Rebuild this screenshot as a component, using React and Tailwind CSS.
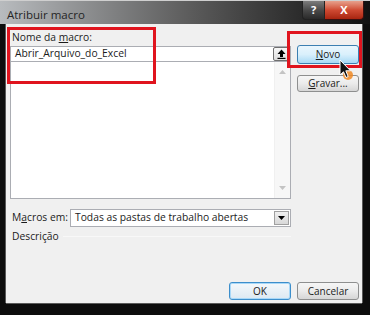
import React from 'react';

const font = { fontFamily: '"Open Sans", "Noto Sans", sans-serif' };

function Btn({ children, primary, focused, className = '' }) {
    const base = 'flex items-center justify-center rounded-[3px] border text-[10px] text-[#1b1b1b]';
    const skin = primary
        ? 'border-[#3c7fb1] bg-gradient-to-b from-[#eaf6fd] via-[#d9f0fc] to-[#a7d9f5]'
        : focused
            ? 'border-[#3c8ecb] bg-gradient-to-b from-[#f4f8fb] to-[#dde9f2] shadow-[inset_0_0_0_1px_#a8d8f8]'
            : 'border-[#8e8f8f] bg-gradient-to-b from-[#f6f6f6] via-[#ebebeb] to-[#d6d6d6]';
    return <div className={`${base} ${skin} ${className}`}>{children}</div>;
}

function Cursor() {
    return (
        <svg className="absolute left-[337px] top-[59px]" width="22" height="24" viewBox="0 0 22 24">
            <circle cx="11" cy="16" r="5" fill="#f08a24" opacity="0.85" />
            <path d="M3 1 L3 16 L6.5 12.8 L9 18.5 L11.2 17.5 L8.8 11.8 L13.5 11.8 Z" fill="#111" stroke="#fff" strokeWidth="1" strokeLinejoin="round" />
        </svg>
    );
}

export default function App() {
    return (
        <div className="relative w-[370px] h-[315px] bg-[#0d0d0d] overflow-hidden select-none" style={font}>
            {/* title bar */}
            <div className="h-[24px] flex items-start bg-gradient-to-r from-[#b8bbbe] via-[#5e5e5e] to-[#111] border-t border-[#cfcfcf]">
                <span className="ml-[7px] mt-[5px] text-[11.5px] text-[#252525]">Atribuir macro</span>
                <div className="ml-auto mr-[6px] flex">
                    <div className="w-[23px] h-[19px] flex items-center justify-center rounded-bl-[4px] border border-t-0 border-[#222] bg-gradient-to-b from-[#7c7c7c] via-[#4a4a4a] to-[#2a2a2a] text-[11px] font-bold text-white">?</div>
                    <div className="w-[39px] h-[19px] flex items-center justify-center rounded-br-[4px] border border-l-0 border-t-0 border-[#3a1010] bg-gradient-to-b from-[#e6a08c] via-[#cf4a32] to-[#a8240f] text-[11px] font-bold text-white">X</div>
                </div>
            </div>

            <div className="flex h-[279px]">
                <div className="w-[6px] border-r border-[#5a5a5a]" />
                <div className="relative flex-1 bg-[#f0f0f0] flex">
                    {/* left column */}
                    <div className="w-[281px] ml-[4px] flex flex-col">
                        <div className="mt-[7px] h-[13px] text-[10.3px] leading-[13px] text-[#1b1b1b] ml-[2px]">Nome da <u>m</u>acro:</div>
                        <div className="mt-[2px] h-[16px] flex items-center border border-[#abadb3] bg-white">
                            <span className="ml-[4px] text-[10.3px] text-[#1b1b1b]">Abrir_Arquivo_do_Excel</span>
                            <div className="ml-auto mr-[1px] w-[16px] h-[14px] flex items-center justify-center border border-[#707070] rounded-[2px] bg-gradient-to-b from-[#f8f8f8] to-[#dcdcdc]">
                                <svg width="9" height="10" viewBox="0 0 9 10">
                                    <path d="M4.5 0.5 L8.5 5 L6 5 L6 8 L3 8 L3 5 L0.5 5 Z" fill="#000" />
                                    <rect x="0.5" y="8.8" width="8" height="1.2" fill="#000" />
                                </svg>
                            </div>
                        </div>
                        <div className="h-[137px] flex border border-t-0 border-[#abadb3] bg-white">
                            <div className="flex-1" />
                            <div className="w-[16px] flex flex-col items-center justify-between py-[8px] bg-[#f7f7f7] border-l border-[#f0f0f0]">
                                <svg width="7" height="4" viewBox="0 0 7 4"><path d="M0 4 L3.5 0 L7 4 Z" fill="#c4c4c4" /></svg>
                                <svg width="7" height="4" viewBox="0 0 7 4"><path d="M0 0 L3.5 4 L7 0 Z" fill="#c4c4c4" /></svg>
                            </div>
                        </div>
                        <div className="mt-[10px] flex items-center">
                            <span className="w-[58px] ml-[2px] text-[10.3px] text-[#1b1b1b]">M<u>a</u>cros em:</span>
                            <div className="flex-1 h-[18px] flex items-center border border-[#abadb3] bg-white">
                                <span className="ml-[4px] text-[10.3px] text-[#1b1b1b]">Todas as pastas de trabalho abertas</span>
                                <div className="ml-auto mr-[1px] w-[15px] h-[14px] flex items-center justify-center border border-[#a0a0a0] bg-gradient-to-b from-[#f0f0f0] to-[#d8d8d8]">
                                    <svg width="7" height="4" viewBox="0 0 7 4"><path d="M0 0 L3.5 4 L7 0 Z" fill="#000" /></svg>
                                </div>
                            </div>
                        </div>
                        <div className="mt-[2px] flex items-center">
                            <span className="ml-[2px] text-[10.3px] text-[#1b1b1b]">Descrição</span>
                            <div className="flex-1 ml-[4px] h-px bg-[#f8f8f8]" />
                        </div>
                        <div className="mt-auto mb-[3px] flex justify-end">
                            <Btn focused className="w-[62px] h-[18px]">OK</Btn>
                        </div>
                    </div>

                    {/* right column */}
                    <div className="ml-[6px] w-[62px] flex flex-col">
                        <Btn primary className="mt-[21px] h-[19px]"><span><u>N</u>ovo</span></Btn>
                        <Btn className="mt-[11px] h-[17px]"><span><u>G</u>ravar...</span></Btn>
                        <Btn className="mt-auto mb-[3px] h-[18px]">Cancelar</Btn>
                    </div>

                    {/* annotation boxes */}
                    <div className="absolute left-[1px] top-[3px] w-[149px] h-[57px] border-[3px] border-[#e0141e]" />
                    <div className="absolute left-[281px] top-[7px] w-[75px] h-[37px] border-[3px] border-[#e0141e]" />
                </div>
                <div className="w-[8px] border-l border-[#5a5a5a]" />
            </div>
            <div className="h-[12px] border-t border-[#5a5a5a] ml-[6px] mr-[8px]" />

            <Cursor />
        </div>
    );
}
